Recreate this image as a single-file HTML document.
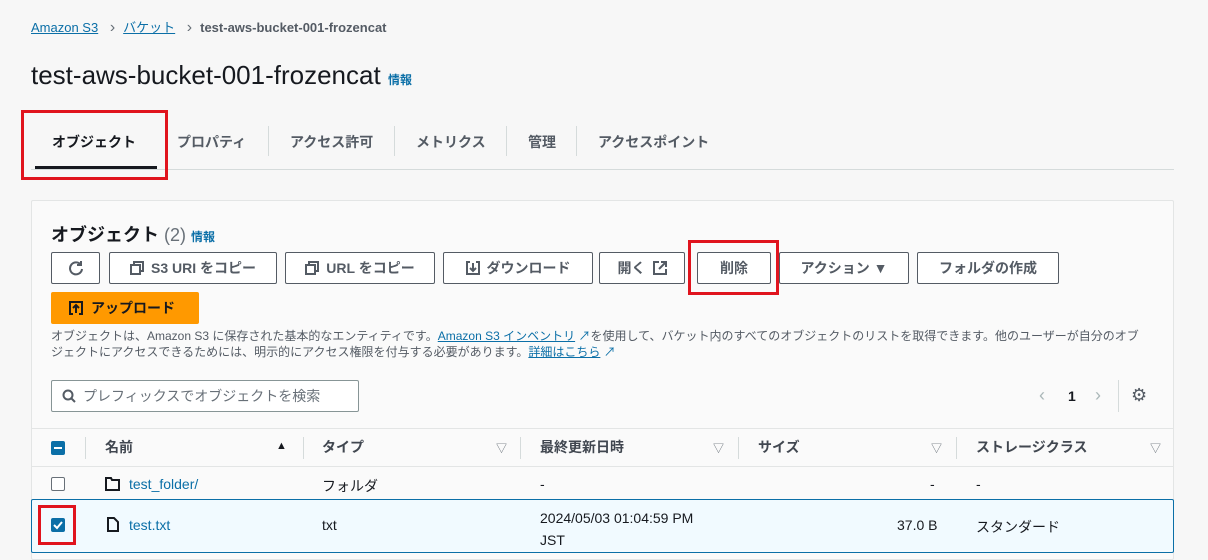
<!DOCTYPE html><html><head><meta charset="utf-8"><style>
*{box-sizing:border-box;margin:0;padding:0}
body{width:1208px;height:559px;overflow:hidden;background:#f7f7f7;font-family:"Liberation Sans","Noto Sans CJK JP",sans-serif;color:#16191f;position:relative;font-size:14px}
.a{position:absolute;white-space:nowrap}
.lnk{color:#0b6fa7}
.btn{position:absolute;top:252px;height:32px;border:1px solid #545b64;border-radius:2px;background:#fff;font-weight:bold;font-size:14px;color:#545b64;display:flex;align-items:center;justify-content:center;gap:7px}
.red{position:absolute;border:3px solid #e0141e}
.hd{position:absolute;top:437px;font-weight:bold;font-size:14px;color:#414750}
.sep{position:absolute;width:1px;background:#d5dbdb}
.cb{position:absolute;width:14px;height:14px;border:1px solid #687078;border-radius:2px;background:#fff}
svg{display:block}
</style></head><body>
<div class="a" style="left:31px;top:17px;font-size:13px"><span class="lnk" style="text-decoration:underline">Amazon S3</span> <span style="color:#687078;margin:0 8px;font-size:16px">›</span><span class="lnk" style="text-decoration:underline">バケット</span> <span style="color:#687078;margin:0 8px;font-size:16px">›</span><span style="color:#545b64;font-weight:bold">test-aws-bucket-001-frozencat</span></div>
<div class="a" style="left:31px;top:60px;font-size:26px;color:#16191f">test-aws-bucket-001-frozencat <span class="lnk" style="font-size:12px;font-weight:bold">情報</span></div>
<div class="a" style="left:31px;top:169px;width:1143px;height:1px;background:#d5dbdb"></div>
<div class="a" style="left:35px;top:166px;width:122px;height:3px;background:#16191f"></div>
<div class="a" style="left:52px;top:132px;font-weight:bold;color:#16191f">オブジェクト</div>
<div class="a" style="left:177px;top:132px;font-weight:bold;color:#545b64">プロパティ</div>
<div class="a" style="left:290px;top:132px;font-weight:bold;color:#545b64">アクセス許可</div>
<div class="a" style="left:416px;top:132px;font-weight:bold;color:#545b64">メトリクス</div>
<div class="a" style="left:528px;top:132px;font-weight:bold;color:#545b64">管理</div>
<div class="a" style="left:598px;top:132px;font-weight:bold;color:#545b64">アクセスポイント</div>
<div class="sep" style="left:166px;top:126px;height:30px"></div><div class="sep" style="left:268px;top:126px;height:30px"></div><div class="sep" style="left:394px;top:126px;height:30px"></div><div class="sep" style="left:506px;top:126px;height:30px"></div><div class="sep" style="left:576px;top:126px;height:30px"></div>
<div class="red" style="left:21px;top:110px;width:147px;height:70px"></div>
<div class="a" style="left:31px;top:200px;width:1143px;height:360px;background:#fafafa;border:1px solid #e3e5e5;border-radius:2px"></div>
<div class="a" style="left:51px;top:221px;font-size:18px;font-weight:bold">オブジェクト <span style="font-weight:normal;color:#687078">(2)</span> <span class="lnk" style="font-size:12px">情報</span></div>
<div class="btn" style="left:51px;width:49px"><svg width="16" height="16" viewBox="0 0 16 16" fill="none" stroke="#545b64" stroke-width="2"><path d="M13 5A6 6 0 1 0 14 9"/><path d="M13 1v4H9"/></svg></div>
<div class="btn" style="left:109px;width:168px"><svg width="14" height="14" viewBox="0 0 14 14" fill="none" stroke="#545b64" stroke-width="2"><rect x="1" y="4" width="9" height="9"/><path d="M4 4V1h9v9h-3"/></svg>S3 URI をコピー</div>
<div class="btn" style="left:285px;width:150px"><svg width="14" height="14" viewBox="0 0 14 14" fill="none" stroke="#545b64" stroke-width="2"><rect x="1" y="4" width="9" height="9"/><path d="M4 4V1h9v9h-3"/></svg>URL をコピー</div>
<div class="btn" style="left:443px;width:150px"><svg width="14" height="14" viewBox="0 0 14 14" fill="none" stroke="#545b64" stroke-width="2"><path d="M4 1H1v12h12V1h-3M7 2v8M4 7l3 3 3-3"/></svg>ダウンロード</div>
<div class="btn" style="left:599px;width:86px">開く<svg width="14" height="14" viewBox="0 0 14 14" fill="none" stroke="#545b64" stroke-width="2"><path d="M6 1H1v12h12V8M8 1h5v5M13 1L6 8"/></svg></div>
<div class="btn" style="left:697px;width:74px">削除</div>
<div class="btn" style="left:779px;width:130px">アクション ▼</div>
<div class="btn" style="left:917px;width:142px">フォルダの作成</div>
<div class="red" style="left:688px;top:240px;width:91px;height:55px"></div>
<div class="a" style="left:51px;top:292px;width:148px;height:32px;background:#ff9900;border-radius:2px;font-weight:bold;color:#16191f;display:flex;align-items:center;gap:8px;padding-left:18px"><svg width="14" height="14" viewBox="0 0 14 14" fill="none" stroke="#16191f" stroke-width="2"><path d="M4 13H1V1h12v12h-3M7 12V4M4 7l3-3 3 3"/></svg>アップロード</div>
<div class="a" style="left:51px;top:328px;font-size:12px;color:#545b64;line-height:16px">オブジェクトは、Amazon S3 に保存された基本的なエンティティです。<span class="lnk" style="text-decoration:underline">Amazon S3 インベントリ</span> <span class="lnk">↗</span>を使用して、バケット内のすべてのオブジェクトのリストを取得できます。他のユーザーが自分のオブ<br>ジェクトにアクセスできるためには、明示的にアクセス権限を付与する必要があります。<span class="lnk" style="text-decoration:underline">詳細はこちら</span> <span class="lnk">↗</span></div>
<div class="a" style="left:51px;top:380px;width:308px;height:32px;border:1px solid #879596;border-radius:2px;background:#fff;color:#687078;padding:0 10px;display:flex;align-items:center;gap:7px"><svg width="14" height="14" viewBox="0 0 14 14" fill="none" stroke="#545b64" stroke-width="2"><circle cx="6" cy="6" r="4.5"/><path d="M9.5 9.5L13 13"/></svg>プレフィックスでオブジェクトを検索</div>
<div class="a" style="left:1039px;top:385px;font-size:18px;color:#aab7b8">‹</div>
<div class="a" style="left:1068px;top:388px;font-weight:bold">1</div>
<div class="a" style="left:1095px;top:385px;font-size:18px;color:#aab7b8">›</div>
<div class="sep" style="left:1118px;top:380px;height:32px"></div>
<div class="a" style="left:1131px;top:385px;font-size:18px;color:#545b64">⚙</div>
<div class="a" style="left:32px;top:428px;width:1141px;height:1px;background:#e3e5e5"></div>
<div class="a" style="left:51px;top:441px;width:14px;height:14px;background:#0b6fa7;border-radius:2px"><div style="position:absolute;left:3px;top:6px;width:8px;height:2px;background:#fff"></div></div>
<div class="sep" style="left:85px;top:437px;height:22px"></div>
<div class="hd" style="left:105px">名前</div><div class="a" style="left:276px;top:440px;font-size:11px">▲</div>
<div class="sep" style="left:303px;top:437px;height:22px"></div>
<div class="hd" style="left:322px">タイプ</div><div class="a" style="left:496px;top:440px;font-size:11px;color:#687078">▽</div>
<div class="sep" style="left:520px;top:437px;height:22px"></div>
<div class="hd" style="left:540px">最終更新日時</div><div class="a" style="left:713px;top:440px;font-size:11px;color:#687078">▽</div>
<div class="sep" style="left:738px;top:437px;height:22px"></div>
<div class="hd" style="left:758px">サイズ</div><div class="a" style="left:931px;top:440px;font-size:11px;color:#687078">▽</div>
<div class="sep" style="left:956px;top:437px;height:22px"></div>
<div class="hd" style="left:976px">ストレージクラス</div><div class="a" style="left:1150px;top:440px;font-size:11px;color:#687078">▽</div>
<div class="a" style="left:32px;top:466px;width:1141px;height:1px;background:#e3e5e5"></div>
<div class="cb" style="left:51px;top:477px"></div>
<svg class="a" style="left:105px;top:477px" width="15" height="14" viewBox="0 0 15 14" fill="none" stroke="#16191f" stroke-width="2"><path d="M1 1h5l1 2h7v10H1z"/></svg>
<div class="a lnk" style="left:129px;top:476px">test_folder/</div>
<div class="a" style="left:322px;top:476px">フォルダ</div>
<div class="a" style="left:540px;top:476px">-</div><div class="a" style="left:930px;top:476px">-</div><div class="a" style="left:976px;top:476px">-</div>
<div class="a" style="left:31px;top:499px;width:1143px;height:54px;background:#f1faff;border:1px solid #0b6fa7;border-radius:2px"></div>
<div class="a" style="left:51px;top:518px;width:14px;height:14px;background:#0b6fa7;border-radius:2px"><svg width="14" height="14" viewBox="0 0 14 14" fill="none" stroke="#fff" stroke-width="2"><path d="M3 7l3 3 5-6"/></svg></div>
<div class="red" style="left:38px;top:505px;width:38px;height:40px"></div>
<svg class="a" style="left:107px;top:517px" width="12" height="15" viewBox="0 0 12 15" fill="none" stroke="#16191f" stroke-width="2"><path d="M1 1h6l4 4v9H1z"/></svg>
<div class="a lnk" style="left:129px;top:517px">test.txt</div>
<div class="a" style="left:322px;top:517px">txt</div>
<div class="a" style="left:540px;top:507px;line-height:22px">2024/05/03 01:04:59 PM<br>JST</div>
<div class="a" style="left:897px;top:517px">37.0 B</div>
<div class="a" style="left:976px;top:517px">スタンダード</div>
</body></html>
